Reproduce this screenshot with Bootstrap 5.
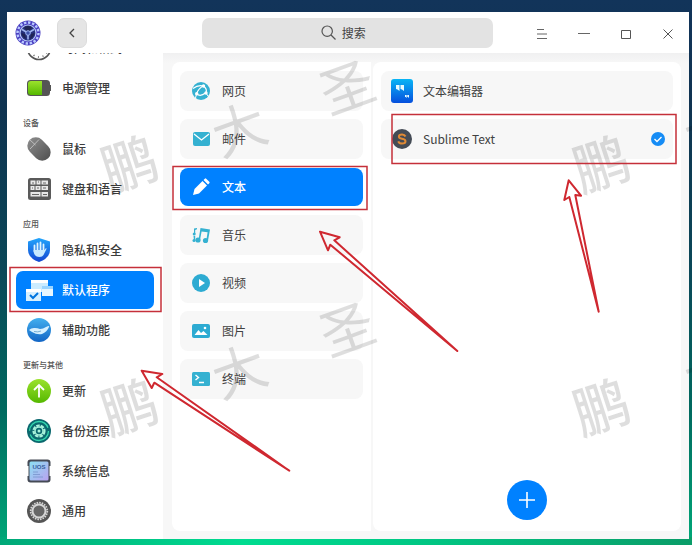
<!DOCTYPE html>
<html lang="zh-CN">
<head>
<meta charset="utf-8">
<meta name="viewport" content="width=device-width, initial-scale=1">
<title>默认程序</title>
<link rel="stylesheet" href="https://cdn.jsdelivr.net/npm/bootstrap@5.3.0/dist/css/bootstrap.min.css">
<style>
body{font-family:"Noto Sans CJK SC",sans-serif;font-size:12px;line-height:20px;color:#414141;
 background:linear-gradient(90deg,#00a878 0,#00dc90 35%,#00c884 60%,#0a9c68 100%) bottom/100% 8px no-repeat,
 linear-gradient(180deg,#12345a 0,#0f3350 20%,#0a4858 50%,#00695f 75%,#00a878 100%)}
.desktop{padding:12px 3px 6px 7px}
.window{background:#fff;min-height:0}
.titlebar{height:41px;padding:0 0 0 8px}
.back{width:30px;height:30px;background:#e5e5e5;border:1px solid #dcdcdc;border-radius:7px;margin-left:16px}
.search{flex:0 1 291px;height:30px;background:#e3e3e3;border-radius:7px;margin-left:115px}
.search-icon{flex:0 0 48%;padding-right:6px}
.search input{background:none;border:0;outline:0;min-width:0;padding:0;color:#444}
.search input::placeholder{color:#444;opacity:1}
.winbtn{width:42px;height:30px;background:none;border:0;padding:0}
.content-row{min-height:0}
.side{width:156px;padding:0 9px 8px}
.side h2{font-size:8px;line-height:13px;margin:0;padding:8px 0 0 7px;font-weight:500;color:#555;flex:none}
.side a{flex:none;height:38px;margin:1px 0;padding-left:10px;gap:10px;color:#3c3c3c;font-weight:500;text-decoration:none;border-radius:7px}
.side a svg{width:26px;height:26px;flex:none}
.side a.current{background:#0081ff;color:#fff}
.main-area{background:linear-gradient(#f0f0f1 0,#f7f7f7 10px);padding:9px 8px 8px 9px;gap:2px;min-width:0}
.panel{background:#fff;padding:9px 8px;border-radius:8px;gap:8px}
.kinds{flex:0 0 199px;border-top-right-radius:0;border-bottom-right-radius:0}
.apps{padding-bottom:11px}
.tile{height:40px;background:#f7f7f7;border:0;border-radius:8px;color:#414141;padding:0 12px;text-align:left;flex:none}
.tile svg{flex:none}
.kinds .tile{gap:12px}
.kinds .tile svg{width:18px;height:18px}
.kinds .tile.current{background:#0081ff;color:#fff;font-weight:500;height:38px;margin:1px 0}
.apps .tile{gap:10px;padding:0 8px 0 10px}
.apps .tile svg.app{width:22px;height:24px}
.add{width:40px;height:40px;background:#0081ff;border:0;border-radius:50%}
.notes{inset:0;width:100%;height:100%;pointer-events:none;overflow:hidden}
.notes text{font-family:"Noto Sans CJK SC",sans-serif;fill:#000;fill-opacity:.13;text-anchor:middle}
</style>
<script src="https://cdn.jsdelivr.net/npm/bootstrap@5.3.0/dist/js/bootstrap.bundle.min.js"></script>
</head>
<body class="vh-100 overflow-hidden position-relative">
<div class="desktop d-flex flex-column h-100">
<div class="window d-flex flex-column flex-fill">
<header class="titlebar d-flex align-items-center flex-shrink-0">
 <svg width="26" height="26" viewBox="0 0 26 26" aria-hidden="true">
  <circle cx="13" cy="13" r="12.5" fill="#4a3fc0"/><circle cx="13" cy="13" r="10.5" fill="none" stroke="#b9c9ff" stroke-width="2.4" stroke-dasharray="2.4 1.7"/>
  <circle cx="13" cy="13" r="8.6" fill="#b8c8f6"/><circle cx="13" cy="13" r="7.4" fill="#26317c"/>
  <path d="M13 13V19.500M13 13 7 9.500M13 13l6-3.500" stroke="#9fb4ef" stroke-width="1.600"/><path d="M9 7.500q4-3 8 0l-2.500 3.500h-3zM6.500 13l3.500 1 1 5q-4-2-4.500-6zM19.500 13l-3.500 1-1 5q4-2 4.500-6z" fill="#202453"/><circle cx="13" cy="13" r="2.300" fill="#3d52aa" stroke="#9fb4ef"/>
 </svg>
 <button class="back d-flex align-items-center justify-content-center p-0" aria-label="返回"><svg width="8" height="10" viewBox="0 0 8 10" fill="none" stroke="#444" stroke-width="1.300"><path d="M6 1 2 5l4 4"/></svg></button>
 <label class="search d-flex align-items-center">
  <span class="search-icon d-flex justify-content-end"><svg width="15" height="15" viewBox="0 0 15 15" fill="none" stroke="#555" stroke-width="1.200"><circle cx="6.200" cy="6.200" r="5.200"/><path d="m10 10 4.500 4.500"/></svg></span>
  <input class="flex-fill" type="search" placeholder="搜索" aria-label="搜索">
 </label>
 <button class="winbtn ms-auto" aria-label="菜单"><svg width="12" height="12" viewBox="0 0 12 12" stroke="#666"><path d="M1 1.500h7M1 6h10M1 10.500h10"/></svg></button>
 <button class="winbtn" aria-label="最小化"><svg width="12" height="12" viewBox="0 0 12 12" stroke="#666"><path d="M0 5.500h12"/></svg></button>
 <button class="winbtn" aria-label="最大化"><svg width="12" height="12" viewBox="0 0 12 12" stroke="#555" fill="none"><path d="M1.500 2.500h9v8h-9z"/></svg></button>
 <button class="winbtn" aria-label="关闭"><svg width="12" height="12" viewBox="0 0 12 12" stroke="#555"><path d="m1.500 1.500 9 9m0-9-9 9"/></svg></button>
</header>
<div class="content-row d-flex flex-fill">
<nav class="side d-flex flex-column justify-content-end overflow-hidden flex-shrink-0">
 <a href="#" class="d-flex align-items-center"><svg viewBox="0 0 26 26"><circle cx="13" cy="13" r="11.500" fill="#fff" stroke="#555" stroke-width="1.600"/><circle cx="13" cy="13" r="9" fill="none" stroke="#555" stroke-width="1.500" stroke-dasharray="1 3.710"/><path d="M13 6v7h5" fill="none" stroke="#444"/></svg>时间和格式</a>
 <a href="#" class="d-flex align-items-center"><svg viewBox="0 0 26 26"><defs><linearGradient id="gb" x2="0" y2="1"><stop stop-color="#9be22c"/><stop offset="1" stop-color="#55b800"/></linearGradient></defs><rect x="1" y="5" width="23" height="16" rx="3.500" fill="#555"/><path d="M5 6h11v14H5q-3 0-3-3V9q0-3 3-3z" fill="url(#gb)"/><path d="M24 10h1v6h-1z" fill="#555"/></svg>电源管理</a>
 <h2>设备</h2>
 <a href="#" class="d-flex align-items-center"><svg viewBox="0 0 26 26"><defs><linearGradient id="gm" x2="0" y2="1"><stop stop-color="#888"/><stop offset="1" stop-color="#555"/></linearGradient></defs><rect x="4.500" y="0" width="17" height="26" rx="8.500" fill="url(#gm)" transform="rotate(-45 13 13)"/><path d="m4 13 9-9.500M4 4l5.500 5" stroke="#ccc" stroke-width=".8"/></svg>鼠标</a>
 <a href="#" class="d-flex align-items-center"><svg viewBox="0 0 26 26"><rect x="2" y="2" width="23" height="22" rx="2.500" fill="#5a5a5a"/><path d="M4.500 4.500h5v4h-5zm6 0h4v4h-4zm5 0h6.500v4h-6.500zM4.500 10h4v4h-4zm5 0h5v4h-5zm6 0h6.500v4h-6.500zM4.500 16h10v4.500h-10zm11 0h6.500v4.500h-6.500z" fill="#e8e8e8"/><path d="M6 7h2m4-1h1m4 1h3M6 12h1m4 0h2m4 0h3M6 18.500h7m4 0h4" stroke="#666"/></svg>键盘和语言</a>
 <h2>应用</h2>
 <a href="#" class="d-flex align-items-center"><svg viewBox="0 0 26 26"><defs><linearGradient id="gs" x2="0" y2="1"><stop stop-color="#22a5fc"/><stop offset="1" stop-color="#1346d2"/></linearGradient></defs><path d="M13 1 24 4.500V13q0 8-11 12Q2 21 2 13V4.500z" fill="url(#gs)"/><path d="M8.500 8.500v6m3-8v8m3-9v9m3-7v7" stroke="#dff4ff" stroke-width="1.800" stroke-linecap="round"/><path d="M7.600 13h10.800l1.600-2q1 0 0 2l-2.500 5q-1 2-4 2-5.900 0-5.900-7z" fill="#c8eaff"/></svg>隐私和安全</a>
 <a href="#" class="current d-flex align-items-center" aria-current="page"><svg class="overflow-visible" viewBox="0 0 26 26"><path d="M5 3h17v12H5z" fill="#ccecff"/><path d="M5 3h17v3H5z" fill="#fff"/><path d="M16 9h11v10H16z" fill="#e8f7ff"/><path d="M16 9h11v3H16z" fill="#9bd5ff"/><path d="M0 12h15v12H0z" fill="#d7f0ff"/><path d="M0 12h15v3H0z" fill="#fff"/><path d="m4 18 3 3 5-5" stroke="#0075df" stroke-width="2" fill="none"/></svg>默认程序</a>
 <a href="#" class="d-flex align-items-center"><svg viewBox="0 0 26 26"><defs><linearGradient id="ga" x2="0" y2="1"><stop stop-color="#43b0ef"/><stop offset="1" stop-color="#1265c5"/></linearGradient></defs><circle cx="13" cy="13" r="12" fill="url(#ga)"/><path d="M3 13q2-2 5-2 3-.3 6 1 3 0 6-2 4-2 3 0-2 5-7 7-5 1-10-2z" fill="#d6f0ff"/><path d="M8 14.500q4 1 7-.5" fill="none" stroke="#78aed3"/></svg>辅助功能</a>
 <h2>更新与其他</h2>
 <a href="#" class="d-flex align-items-center"><svg viewBox="0 0 26 26"><circle cx="13" cy="13" r="12" fill="url(#gb)"/><path d="M13 19.500V7M8 12l5-5 5 5" stroke="#fff" stroke-width="1.800" fill="none"/></svg>更新</a>
 <a href="#" class="d-flex align-items-center"><svg viewBox="0 0 26 26"><circle cx="13" cy="13" r="12" fill="#0b686e"/><circle cx="13" cy="13" r="9.500" fill="none" stroke="#35d7ae" stroke-width="1.300" stroke-dasharray="26 4"/><circle cx="13" cy="13" r="5.500" fill="none" stroke="#a9f4dc" stroke-width="2.200" stroke-dasharray="3.500 1"/><circle cx="13" cy="13" r="4" fill="none" stroke="#a9f4dc" stroke-width="1.500"/><circle cx="13" cy="13" r="1.500" fill="#a9f4dc"/></svg>备份还原</a>
 <a href="#" class="d-flex align-items-center"><svg viewBox="0 0 26 26"><defs><linearGradient id="gu" x2="1" y2="1"><stop stop-color="#8be0f2"/><stop offset="1" stop-color="#b9a2f0"/></linearGradient></defs><rect x="1.500" y="1.500" width="23" height="23" rx="3" fill="#454a55"/><path d="M0 8h2.500v10H0zM23.500 8H26v10h-2.500z" fill="#fff"/><rect x="3.500" y="3.500" width="19" height="19" rx="1.500" fill="url(#gu)"/><text x="13" y="11" font-size="6" font-weight="700" text-anchor="middle" fill="#35609c" font-family="Liberation Sans,sans-serif">UOS</text><path d="M7 14h5m-5 2.500h7m-7 2.500h10" stroke="#7794cc" stroke-width=".8"/></svg>系统信息</a>
 <a href="#" class="d-flex align-items-center"><svg viewBox="0 0 26 26"><circle cx="13" cy="13" r="12" fill="#555"/><circle cx="13" cy="13" r="8.300" fill="none" stroke="#d5d5d5" stroke-width="1.800" stroke-dasharray="1.600 1"/><circle cx="13" cy="13" r="6.500" fill="#666" stroke="#d5d5d5" stroke-width="2"/></svg>通用</a>
</nav>
<main class="main-area d-flex flex-fill">
 <section class="panel kinds d-flex flex-column">
  <button class="tile d-flex align-items-center"><svg viewBox="0 0 18 18"><circle cx="9" cy="9" r="9" fill="#35b1d1"/><path d="M1 6.500q5-4 10.500-2.500 4 3 2.500 7M11 4Q6 7 4.500 12q4 3 9-1" fill="none" stroke="#fff" stroke-width="1.200"/><path d="m4.500 12-1 4M14 11l2 3" stroke="#fff"/><circle cx="11.500" cy="4" r="1.700" fill="#fff"/><circle cx="4.700" cy="11.700" r="1.700" fill="#fff"/><circle cx="14" cy="11" r="1.700" fill="#fff"/></svg>网页</button>
  <button class="tile d-flex align-items-center"><svg viewBox="0 0 18 18"><rect x="1" y="2" width="17" height="14" rx="2" fill="#35b1d1"/><path d="m2 4 7.500 6L17 4" stroke="#fff" stroke-width="1.300" fill="none"/></svg>邮件</button>
  <button class="tile current d-flex align-items-center" aria-pressed="true"><svg viewBox="0 0 18 18" fill="#fff"><path d="m1 17 1.500-6 8-8 4.500 4.500-8 8zM11.500 2l1.300-1.300q.7-.7 1.400 0l3.100 3.100q.7.700 0 1.400L16 6.500z"/></svg>文本</button>
  <button class="tile d-flex align-items-center"><svg viewBox="0 0 18 18" fill="#35b1d1"><path d="m8.500 2 9.500 1.500-2 11h-1.700l1.300-8.200-6-.9L8 14H6.500z"/><circle cx="6" cy="14" r="2.600"/><circle cx="13.500" cy="14.500" r="2.600"/><path d="M2 2.500 5 2v1.300L3.200 4v4H2zM1.500 10h1.700v5H2z"/><circle cx="2.200" cy="8" r="1.500"/><circle cx="2" cy="14.500" r="1.500"/></svg>音乐</button>
  <button class="tile d-flex align-items-center"><svg viewBox="0 0 18 18"><circle cx="9" cy="9" r="9" fill="#2dabd2"/><path d="m7 5 6 4-6 4z" fill="#fff"/></svg>视频</button>
  <button class="tile d-flex align-items-center"><svg viewBox="0 0 18 18"><rect y="2" width="18" height="14" rx="2" fill="#2dabd2"/><path d="m2.500 13 4-5 2.500 3 2.500-2 4 4z" fill="#fff"/><circle cx="13" cy="6" r="1.300" fill="#fff"/></svg>图片</button>
  <button class="tile d-flex align-items-center"><svg viewBox="0 0 18 18"><rect y="2" width="18" height="14" rx="1.500" fill="#35b1d1"/><path d="m3.500 5 3 2.500-3 2.500M7 12.500h5" stroke="#fff" stroke-width="1.400" fill="none"/></svg>终端</button>
 </section>
 <section class="panel apps d-flex flex-column flex-fill">
  <button class="tile d-flex align-items-center"><svg class="app" viewBox="0 0 22 24"><defs><linearGradient id="ge" x2="0" y2="1"><stop stop-color="#08b5f5"/><stop offset="1" stop-color="#064fdd"/></linearGradient></defs><rect width="22" height="24" rx="3" fill="url(#ge)"/><path d="M5 6h3.500v6L6.500 10.500 5 10zM9.500 6H13v6l-2-1.500-1.500-.5zM14 16h1.700v3l-1-1h-.7zM16.300 16H18v3l-1-1h-.7z" fill="#e8fbff"/></svg><span>文本编辑器</span></button>
  <button class="tile d-flex align-items-center" aria-pressed="true"><svg class="app" viewBox="0 0 22 24"><circle cx="11" cy="12" r="10" fill="#444b55"/><path d="M14.500 9.500Q13.500 7.300 11 7.400 7.900 7.500 7.900 9.500q0 1.800 3.100 2.300 3.500.5 3.500 2.500 0 2.200-3.300 2.300-3 0-4-2.300" fill="none" stroke="#e08a35" stroke-width="2"/></svg><span>Sublime Text</span><svg class="ms-auto" width="14" height="14" viewBox="0 0 14 14"><circle cx="7" cy="7" r="7" fill="#168cf5"/><path d="m3.500 7 2.500 2.500L10.500 5" stroke="#fff" stroke-width="1.300" fill="none"/></svg></button>
  <button class="add d-flex align-items-center justify-content-center mt-auto mx-auto p-0" aria-label="添加"><svg width="18" height="18" viewBox="0 0 18 18"><path d="M9 1v16M1 9h16" stroke="#fff" stroke-width="1.600"/></svg></button>
 </section>
</main>
</div>
</div>
</div>
<svg class="notes position-absolute" aria-hidden="true">
 <g font-size="56" font-weight="500">
  <text transform="translate(136 184) rotate(-18)">鹏</text><text transform="translate(136 427) rotate(-18)">鹏</text>
  <text transform="translate(608 184) rotate(-18)">鹏</text><text transform="translate(608 427) rotate(-18)">鹏</text>
 </g>
 <g font-size="54">
  <text transform="translate(246 148) rotate(-20)">大</text><text transform="translate(246 390) rotate(-20)">大</text>
  <text transform="translate(718 148) rotate(-20)">大</text><text transform="translate(718 390) rotate(-20)">大</text>
  <text transform="translate(354 106) rotate(-20)">圣</text><text transform="translate(354 348) rotate(-20)">圣</text>
 </g>
 <g fill="none" stroke="#c5303a" stroke-width="1.500">
  <path d="M10 267.500h151v44H10zM173 166.500h194v43H173zM392 114.500h284v49H392z"/>
  <g stroke="#cf2830" stroke-width="2" stroke-linejoin="round"><path d="m141.700 370.700 20.600 3.300-5.600 3.300 132.600 93.400-135-88-2.600 5.300z"/><path d="m320 231.700 19.700 5.600-5.400 3 123 110.700-127-106.300-2.300 5.600z"/><path d="m568.700 180.300 12.300 15.400-5.700-.7 23.400 116.700L569.300 197l-5 3z"/></g>
 </g>
</svg>
</body>
</html>
